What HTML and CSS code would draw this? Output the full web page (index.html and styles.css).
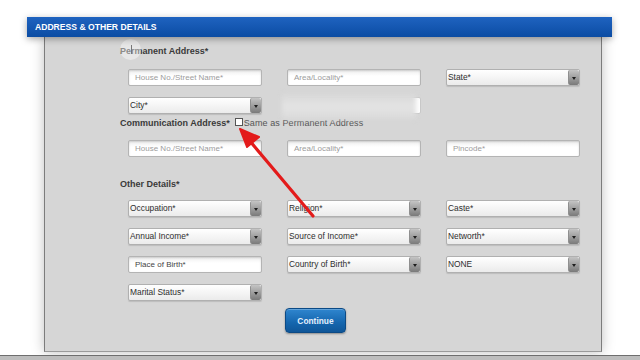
FILE: index.html
```html
<!DOCTYPE html>
<html lang="en">
<head>
    <meta charset="UTF-8">
    <meta name="viewport" content="width=device-width, initial-scale=1.0">
    <title>Address &amp; Other Details</title>
    <link rel="stylesheet" href="styles.css">
</head>
<body>
    <div class="screen">
        <div class="card">
            <div class="card-head">ADDRESS &amp; OTHER DETAILS</div>
            <div class="card-body">
                <div class="section-title">Permanent Address*</div>
                <div class="fields">
                    <div class="field input">House No./Street Name*</div>
                    <div class="field input">Area/Locality*</div>
                    <div class="field select">State*<span class="arrow"></span></div>
                    <div class="field select">City*<span class="arrow"></span></div>
                    <div class="field input blurred"><span class="smudge"></span></div>
                </div>

                <div class="section-title comm">
                    Communication Address*
                    <span class="same"><span class="check"></span>Same as Permanent Address</span>
                </div>
                <div class="fields">
                    <div class="field input">House No./Street Name*</div>
                    <div class="field input">Area/Locality*</div>
                    <div class="field input">Pincode*</div>
                </div>

                <div class="section-title other">Other Details*</div>
                <div class="fields">
                    <div class="field select">Occupation*<span class="arrow"></span></div>
                    <div class="field select">Religion*<span class="arrow"></span></div>
                    <div class="field select">Caste*<span class="arrow"></span></div>
                    <div class="field select">Annual Income*<span class="arrow"></span></div>
                    <div class="field select">Source of Income*<span class="arrow"></span></div>
                    <div class="field select">Networth*<span class="arrow"></span></div>
                    <div class="field input filled">Place of Birth*</div>
                    <div class="field select">Country of Birth*<span class="arrow"></span></div>
                    <div class="field select">NONE<span class="arrow"></span></div>
                    <div class="field select">Marital Status*<span class="arrow"></span></div>
                </div>

                <div class="actions">
                    <button class="btn-continue">Continue</button>
                </div>
            </div>
        </div>
        <div class="footer-strip"></div>

        <!-- cursor highlight and annotation arrow drawn over the form -->
        <div class="cursor-ring"><span class="ibeam"></span></div>
        <svg class="pointer" width="640" height="360" viewBox="0 0 640 360">
            <line x1="313" y1="216" x2="249" y2="140" stroke="#e31b1b" stroke-width="3.2" stroke-linecap="round"/>
            <polygon points="240,129 259,137 247,147" fill="#e31b1b" stroke="#e31b1b" stroke-width="2" stroke-linejoin="round"/>
        </svg>
    </div>
</body>
</html>
```

FILE: styles.css
```css
body {
    margin: 0;
    background-color: #fff;
    font-family: "Liberation Sans", Arial, sans-serif;
}
.screen {
    position: relative;
    width: 640px;
    height: 360px;
    overflow: hidden;
    padding-top: 17px;
    box-sizing: border-box;
}
.card {
    margin-left: 27px;
    width: 585px;
}
.card-head {
    height: 20px;
    line-height: 20px;
    padding-left: 8px;
    color: #fff;
    font-size: 8.6px;
    font-weight: bold;
    background: linear-gradient(#1f63c0, #0b4ca3);
    box-shadow: 0 2px 7px rgba(0,0,0,0.35);
    position: relative;
    z-index: 1;
}
.card-body {
    margin-left: 17px;
    width: 558px;
    height: 315px;
    box-sizing: border-box;
    background-color: #d6d6d6;
    border-left: 1px solid #7c7c7c;
    border-right: 1px solid #7c7c7c;
    border-bottom: 1px solid #9a9a9a;
    box-shadow: 0 0 12px rgba(0,0,0,0.25);
    padding-top: 7px;
}
.section-title {
    margin-left: 75px;
    height: 14px;
    line-height: 14px;
    font-size: 9px;
    font-weight: bold;
    color: #3a3a3a;
}
.section-title.comm {
    margin-top: 2px;
    display: flex;
    align-items: center;
}
.section-title.other {
    margin-top: 20px;
}
.same {
    display: flex;
    align-items: center;
    margin-left: 5px;
    font-weight: normal;
    color: #555;
    font-size: 9px;
    letter-spacing: 0.1px;
}
.check {
    width: 6px;
    height: 6px;
    margin-right: 1px;
    margin-top: -2px;
    background: #fff;
    border: 1px solid #555;
}
.fields {
    display: grid;
    grid-template-columns: repeat(3, 134px);
    column-gap: 25px;
    row-gap: 11px;
    margin-left: 83px;
    margin-top: 11px;
}
.section-title.comm + .fields {
    margin-top: 10px;
}
.section-title.other + .fields {
    margin-top: 9px;
}
.field {
    position: relative;
    height: 17px;
    box-sizing: border-box;
    font-size: 8px;
    line-height: 15px;
    white-space: nowrap;
    overflow: hidden;
}
.input {
    padding-left: 6px;
    color: #9c9c9c;
    background: linear-gradient(#eeeeee, #fff 40%);
    border: 1px solid #b4b4b4;
    border-radius: 2px;
    box-shadow: inset 0 1px 2px rgba(0,0,0,0.15);
}
.input.filled {
    color: #444;
}
.select {
    padding-left: 1px;
    color: #2e2e2e;
    font-size: 8.4px;
    background: linear-gradient(#fff, #ebebeb);
    border: 1px solid #b0b0b0;
    border-radius: 2px;
    box-shadow: 0 1px 1px rgba(0,0,0,0.12);
}
.arrow {
    position: absolute;
    right: 0;
    top: 0;
    width: 10px;
    height: 15px;
    border-radius: 2px;
    background: linear-gradient(#c4c4c4, #7a7a7a);
    border-left: 1px solid #8f8f8f;
}
.arrow::after {
    content: "";
    position: absolute;
    left: 3px;
    top: 7px;
    border-left: 2px solid transparent;
    border-right: 2px solid transparent;
    border-top: 3px solid #1e1e1e;
}
.blurred {
    overflow: visible;
    background: #fff;
    box-shadow: none;
    border-color: #c8c8c8;
}
.smudge {
    position: absolute;
    left: -6px;
    top: -4px;
    width: 134px;
    height: 25px;
    background: linear-gradient(#d8d8d8, #e4e4e4 50%, #dadada);
    filter: blur(2.5px);
}
.actions {
    margin-top: 7px;
    margin-left: 240px;
}
.btn-continue {
    width: 61px;
    height: 25px;
    padding: 0;
    font-family: "Liberation Sans", Arial, sans-serif;
    font-size: 8.4px;
    font-weight: bold;
    color: #e3f0fc;
    background: linear-gradient(#2f86cf, #1566ae 60%, #0f5698);
    border: 1px solid #0c4a85;
    border-radius: 4px;
    box-shadow: 0 1px 2px rgba(0,0,0,0.35), inset 0 1px 0 rgba(255,255,255,0.25);
}
.footer-strip {
    position: absolute;
    left: 0;
    right: 0;
    bottom: 0;
    height: 4px;
    background: #bdbdbd;
    border-top: 1px solid #6e6e6e;
}
.cursor-ring {
    position: absolute;
    left: 120px;
    top: 39px;
    width: 21px;
    height: 21px;
    border-radius: 50%;
    background: rgba(255,255,255,0.42);
}
.ibeam {
    position: absolute;
    left: 11px;
    top: 6px;
    width: 1px;
    height: 9px;
    background: #777;
}
.pointer {
    position: absolute;
    left: 0;
    top: 0;
}
```
